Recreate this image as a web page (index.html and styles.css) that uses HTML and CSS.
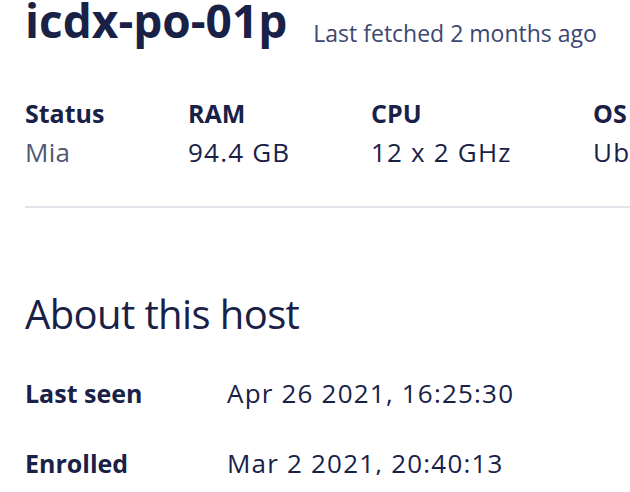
FILE: index.html
```html
<!DOCTYPE html>
<html lang="en">
<head>
<meta charset="utf-8">
<title>icdx-po-01p</title>
<link rel="stylesheet" href="styles.css">
</head>
<body>
<main class="page">
  <header class="host-header">
    <h1 class="host-name">icdx-po-01p</h1>
    <span class="fetched">Last fetched 2 months ago</span>
  </header>
  <section class="summary">
    <div class="summary-item">
      <span class="summary-label">Status</span>
      <span class="summary-value status-value">Mia</span>
    </div>
    <div class="summary-item">
      <span class="summary-label">RAM</span>
      <span class="summary-value">94.4 GB</span>
    </div>
    <div class="summary-item">
      <span class="summary-label">CPU</span>
      <span class="summary-value">12 x 2 GHz</span>
    </div>
    <div class="summary-item">
      <span class="summary-label">OS</span>
      <span class="summary-value">Ubuntu 20.04.2 LTS</span>
    </div>
  </section>
  <hr class="divider">
  <section class="about">
    <h2 class="about-title">About this host</h2>
    <dl class="about-list">
      <dt class="about-label">Last seen</dt>
      <dd class="about-value">Apr 26 2021, 16:25:30</dd>
      <dt class="about-label">Enrolled</dt>
      <dd class="about-value">Mar 2 2021, 20:40:13</dd>
    </dl>
  </section>
</main>
</body>
</html>
```

FILE: styles.css
```css
html, body {
  margin: 0;
  padding: 0;
  overflow: hidden;
  background: #ffffff;
}

body {
  font-family: "Open Sans", "Noto Sans", "DejaVu Sans", sans-serif;
  color: #192147;
}

.page {
  padding-left: 25px;
  width: 800px;
}

.host-header {
  display: flex;
  align-items: flex-start;
  gap: 26px;
  height: 45px;
}

.host-name {
  margin: 0;
  font-size: 46px;
  line-height: 40px;
  font-weight: 700;
  color: #192147;
}

.fetched {
  margin-top: 21px;
  font-size: 23px;
  line-height: 24px;
  color: #3e4771;
}

.summary {
  display: grid;
  grid-template-columns: 163px 183px 222px max-content;
  margin-top: 49px;
  white-space: nowrap;
}

.summary-item {
  display: flex;
  flex-direction: column;
}

.summary-label {
  font-size: 25px;
  line-height: 39px;
  font-weight: 700;
  color: #192147;
}

.summary-value {
  font-size: 26px;
  line-height: 39px;
  font-weight: 400;
  letter-spacing: 1.2px;
  color: #192147;
}

.status-value {
  color: #515774;
  letter-spacing: 0.3px;
}

.divider {
  margin: 34px 0 0 0;
  border: 0;
  height: 2px;
  background: #e2e4ea;
  width: 605px;
}

.about-title {
  margin: 81px 0 0 0;
  font-size: 40px;
  line-height: 50px;
  font-weight: 400;
  letter-spacing: -0.6px;
  color: #192147;
}

.about-list {
  display: grid;
  grid-template-columns: 202px max-content;
  align-items: baseline;
  row-gap: 46px;
  margin: 42px 0 0 0;
}

.about-label {
  margin: 0;
  font-size: 25px;
  line-height: 24px;
  font-weight: 700;
  color: #192147;
}

.about-value {
  margin: 0;
  font-size: 26px;
  line-height: 24px;
  font-weight: 400;
  letter-spacing: 1.2px;
  color: #192147;
}
```
